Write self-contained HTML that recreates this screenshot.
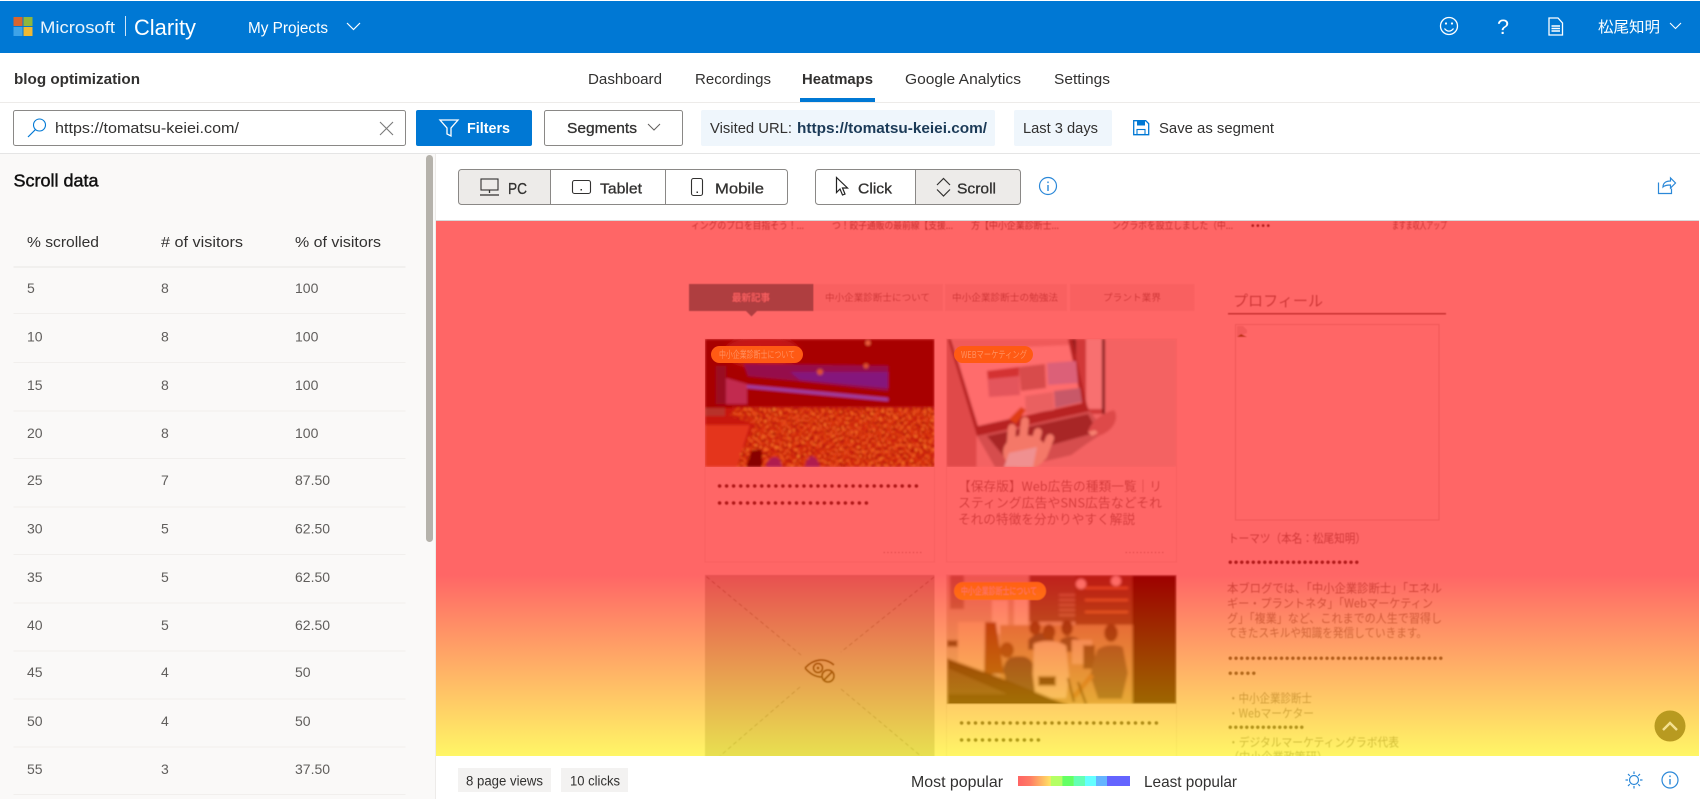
<!DOCTYPE html>
<html lang="en">
<head>
<meta charset="utf-8">
<title>Microsoft Clarity - Heatmaps</title>
<style>
html,body{margin:0;padding:0;background:#fff;width:1700px;height:799px;overflow:hidden}
svg{display:block}
text{font-family:"Liberation Sans","Noto Sans CJK JP",sans-serif;dominant-baseline:auto}
.jp{font-family:"Noto Sans CJK JP","Liberation Sans",sans-serif}
.m{stroke:currentColor;stroke-width:.3}
.w{fill:#fff}
.d{fill:#605e5c;font-size:14px}
.h{fill:#323130;font-size:15px}
.n{fill:#323130;font-size:15px}
.p{fill:#909090;font-size:12px}
.o{fill:#404040;font-size:13px}
.o2{fill:#404040;font-size:15px}
</style>
</head>
<body>
<svg width="1700" height="799" viewBox="0 0 1700 799" xmlns="http://www.w3.org/2000/svg">
<defs>
<linearGradient id="heat" gradientUnits="userSpaceOnUse" x1="0" y1="221" x2="0" y2="756">
<stop offset=".6617" stop-color="#f00"/><stop offset="1" stop-color="rgb(255,240,0)"/>
</linearGradient>
<linearGradient id="lg" x1="0" x2="1" y1="0" y2="0"><stop offset="0" stop-color="#ff6464"/><stop offset=".35" stop-color="#ff7a64"/><stop offset=".7" stop-color="#ffb464"/><stop offset="1" stop-color="#ffe664"/></linearGradient>
<filter id="b" x="-2%" y="-2%" width="104%" height="104%"><feGaussianBlur stdDeviation=".45"/></filter>
<filter id="b2" x="-2%" y="-2%" width="104%" height="104%"><feGaussianBlur stdDeviation="1.200"/></filter>
<filter id="b3" x="-30%" y="-30%" width="160%" height="160%"><feGaussianBlur stdDeviation="3"/></filter>
<filter id="crowd" x="0" y="0" width="100%" height="100%" color-interpolation-filters="sRGB">
<feTurbulence type="fractalNoise" baseFrequency=".45" numOctaves="2" seed="7"/>
<feColorMatrix type="matrix" values="1 0 0 0 .33  1.500 0 0 0 -.6  .5 0 0 0 -.2  0 0 0 0 1"/>
</filter>
<clipPath id="c1"><rect x="705" y="339" width="229.500" height="128"/></clipPath>
<clipPath id="c2"><rect x="946.500" y="339" width="230" height="128"/></clipPath>
<clipPath id="c3"><rect x="946.500" y="575" width="230" height="129"/></clipPath>
<clipPath id="heatclip"><rect x="436" y="221" width="1263" height="535"/></clipPath>
</defs>

<!-- page -->
<rect width="1700" height="799" fill="#fff"/>

<!-- header -->
<rect x="0" y="1" width="1700" height="52" fill="#0078d4"/>
<rect x="13.500" y="17" width="9" height="9" fill="#d9652f"/>
<rect x="23.500" y="17" width="9" height="9" fill="#8fb73c"/>
<rect x="13.500" y="27" width="9" height="9" fill="#3ea3e8"/>
<rect x="23.500" y="27" width="9" height="9" fill="#f0b932"/>
<text x="40" y="33" class="w" font-size="17" textLength="75" lengthAdjust="spacingAndGlyphs" fill-opacity=".92">Microsoft</text>
<rect x="125" y="16" width="1" height="20" fill="#cfe4f7"/>
<text x="134" y="35" class="w" font-size="22" textLength="62" lengthAdjust="spacingAndGlyphs">Clarity</text>
<text x="248" y="33" class="w" font-size="15.500" textLength="80" lengthAdjust="spacingAndGlyphs">My Projects</text>
<path d="M347 23l6.500 6.500L360 23" fill="none" stroke="#fff" stroke-width="1.200"/>
<circle cx="1449" cy="26" r="8.500" fill="none" stroke="#fff" stroke-width="1.300"/>
<circle cx="1446" cy="23.500" r="1.100" fill="#fff"/><circle cx="1452" cy="23.500" r="1.100" fill="#fff"/>
<path d="M1444.500 28.500c2.500 3.500 6.500 3.500 9 0" fill="none" stroke="#fff" stroke-width="1.200"/>
<text x="1497" y="34" class="w" font-size="21" textLength="12" lengthAdjust="spacingAndGlyphs">?</text>
<path d="M1549 18h9l4.500 5v12h-13.500z" fill="none" stroke="#fff" stroke-width="1.300"/>
<path d="M1551.500 26h8.500M1551.500 28.500h8.500M1551.500 31h8.500" stroke="#fff" stroke-width="1.500"/>
<text x="1598" y="32" class="w jp" font-size="15" textLength="62" lengthAdjust="spacingAndGlyphs">松尾知明</text>
<path d="M1670 23l5.500 5.500L1681 23" fill="none" stroke="#fff" stroke-width="1.100"/>

<!-- nav -->
<text x="14" y="84" font-size="15" font-weight="bold" fill="#323130" textLength="126" lengthAdjust="spacingAndGlyphs">blog optimization</text>
<text x="588" y="84" class="n" textLength="74" lengthAdjust="spacingAndGlyphs">Dashboard</text>
<text x="695" y="84" class="n" textLength="76" lengthAdjust="spacingAndGlyphs">Recordings</text>
<text x="802" y="84" class="n" font-weight="bold" textLength="71" lengthAdjust="spacingAndGlyphs">Heatmaps</text>
<text x="905" y="84" class="n" textLength="116" lengthAdjust="spacingAndGlyphs">Google Analytics</text>
<text x="1054" y="84" class="n" textLength="56" lengthAdjust="spacingAndGlyphs">Settings</text>
<rect x="800" y="98" width="75" height="4" fill="#0078d4"/>
<rect x="0" y="102" width="1700" height="1" fill="#edebe9"/>

<!-- filter row -->
<rect x="13.500" y="110.500" width="392" height="35" rx="2" fill="#fff" stroke="#8a8886"/>
<circle cx="39.500" cy="125" r="6" fill="none" stroke="#0078d4" stroke-width="1.100"/>
<path d="M35.500 129.500L28 137" stroke="#0078d4" stroke-width="1.200"/>
<text x="55" y="133" class="n" textLength="184" lengthAdjust="spacingAndGlyphs">https://tomatsu-keiei.com/</text>
<path d="M380 122l13 13M393 122l-13 13" stroke="#7a7a7a" stroke-width="1.100"/>
<rect x="416" y="110" width="116" height="36" rx="2" fill="#0078d4"/>
<path d="M440 120h18l-7 8v8l-4-2v-6z" fill="none" stroke="#fff" stroke-width="1.300"/>
<text x="467" y="133" class="w" font-size="15" font-weight="bold" textLength="43" lengthAdjust="spacingAndGlyphs">Filters</text>
<rect x="544.500" y="110.500" width="138" height="35" rx="2" fill="#fff" stroke="#8a8886"/>
<text x="567" y="133" class="n m" textLength="70" lengthAdjust="spacingAndGlyphs" style="color:#323130">Segments</text>
<path d="M648 124l6 6 6-6" fill="none" stroke="#605e5c" stroke-width="1"/>
<rect x="701" y="110" width="294" height="36" rx="2" fill="#eff6fc"/>
<text x="710" y="133" font-size="15" fill="#323130" textLength="82" lengthAdjust="spacingAndGlyphs">Visited URL:</text>
<text x="797" y="133" font-size="15" font-weight="bold" fill="#1b3a57" textLength="190" lengthAdjust="spacingAndGlyphs">https://tomatsu-keiei.com/</text>
<rect x="1014" y="110" width="98" height="36" rx="2" fill="#eff6fc"/>
<text x="1023" y="133" font-size="15" fill="#323130" textLength="75" lengthAdjust="spacingAndGlyphs">Last 3 days</text>
<path d="M1133.700 120.700h12l3 3v11h-15z" fill="none" stroke="#0078d4" stroke-width="1.300"/>
<rect x="1137" y="121" width="8" height="4.500" fill="#0078d4"/>
<rect x="1137" y="129.500" width="8" height="5" fill="none" stroke="#0078d4" stroke-width="1.100"/>
<text x="1159" y="133" class="n" textLength="115" lengthAdjust="spacingAndGlyphs">Save as segment</text>
<rect x="0" y="153" width="1700" height="1" fill="#e5e5e5"/>

<!-- sidebar -->
<rect x="0" y="154" width="435" height="645" fill="#faf9f8"/>
<rect x="435" y="154" width="1" height="645" fill="#edebe9"/>
<rect x="426" y="155" width="7" height="387" rx="3.500" fill="#b5b2ab"/>
<text x="13.500" y="186.500" font-size="17.500" fill="#111" textLength="85" lengthAdjust="spacingAndGlyphs" style="color:#111;stroke:#111;stroke-width:.45">Scroll data</text>
<text x="27" y="247" class="h" textLength="72" lengthAdjust="spacingAndGlyphs">% scrolled</text>
<text x="161" y="247" class="h" textLength="82" lengthAdjust="spacingAndGlyphs"># of visitors</text>
<text x="295" y="247" class="h" textLength="86" lengthAdjust="spacingAndGlyphs">% of visitors</text>
<g fill="#f1efed">
<rect x="13.500" y="266.500" width="392" height="1" fill="#e8e6e4"/>
<rect x="13.500" y="313" width="392" height="1"/>
<rect x="13.500" y="362" width="392" height="1"/>
<rect x="13.500" y="410.500" width="392" height="1"/>
<rect x="13.500" y="458" width="392" height="1"/>
<rect x="13.500" y="506.500" width="392" height="1"/>
<rect x="13.500" y="554" width="392" height="1"/>
<rect x="13.500" y="602.500" width="392" height="1"/>
<rect x="13.500" y="650.500" width="392" height="1"/>
<rect x="13.500" y="698.500" width="392" height="1"/>
<rect x="13.500" y="746.500" width="392" height="1"/>
<rect x="13.500" y="794" width="392" height="1"/>
</g>
<text x="27" y="293" class="d">5</text><text x="161" y="293" class="d">8</text><text x="295" y="293" class="d">100</text>
<text x="27" y="341.500" class="d">10</text><text x="161" y="341.500" class="d">8</text><text x="295" y="341.500" class="d">100</text>
<text x="27" y="390" class="d">15</text><text x="161" y="390" class="d">8</text><text x="295" y="390" class="d">100</text>
<text x="27" y="438" class="d">20</text><text x="161" y="438" class="d">8</text><text x="295" y="438" class="d">100</text>
<text x="27" y="485" class="d">25</text><text x="161" y="485" class="d">7</text><text x="295" y="485" class="d">87.50</text>
<text x="27" y="533.500" class="d">30</text><text x="161" y="533.500" class="d">5</text><text x="295" y="533.500" class="d">62.50</text>
<text x="27" y="582" class="d">35</text><text x="161" y="582" class="d">5</text><text x="295" y="582" class="d">62.50</text>
<text x="27" y="630" class="d">40</text><text x="161" y="630" class="d">5</text><text x="295" y="630" class="d">62.50</text>
<text x="27" y="677" class="d">45</text><text x="161" y="677" class="d">4</text><text x="295" y="677" class="d">50</text>
<text x="27" y="726" class="d">50</text><text x="161" y="726" class="d">4</text><text x="295" y="726" class="d">50</text>
<text x="27" y="774" class="d">55</text><text x="161" y="774" class="d">3</text><text x="295" y="774" class="d">37.50</text>

<!-- toolbar -->
<path d="M461.500 169.500H550.500V204.500H461.500a3 3 0 0 1-3-3v-29a3 3 0 0 1 3-3z" fill="#edebe9"/>
<rect x="458.500" y="169.500" width="329" height="35" rx="3" fill="none" stroke="#8a8886"/>
<path d="M550.500 169.500v35M665.500 169.500v35" stroke="#8a8886"/>
<rect x="481" y="179" width="17" height="11" fill="none" stroke="#323130" stroke-width="1.100"/>
<path d="M489.500 190v3M480 195h19" stroke="#323130" stroke-width="1.300"/>
<text x="508" y="194" font-size="16" fill="#323130" class="m" textLength="19" lengthAdjust="spacingAndGlyphs" style="color:#323130">PC</text>
<rect x="572.500" y="180.500" width="18" height="13" rx="2" fill="none" stroke="#323130" stroke-width="1.100"/>
<rect x="580.500" y="189" width="1.500" height="1.500" fill="#323130"/>
<text x="600" y="193.500" class="n m" textLength="42" lengthAdjust="spacingAndGlyphs" style="color:#323130">Tablet</text>
<rect x="691.500" y="178.500" width="11" height="17" rx="2" fill="none" stroke="#323130" stroke-width="1.100"/>
<rect x="696.500" y="191.500" width="1.500" height="1.500" fill="#323130"/>
<text x="715" y="193.500" class="n m" textLength="49" lengthAdjust="spacingAndGlyphs" style="color:#323130">Mobile</text>
<path d="M1018 169.500H915.500V204.500H1018a2.500 2.500 0 0 0 2.500-2.500V172a2.500 2.500 0 0 0-2.500-2.500z" fill="#edebe9"/>
<rect x="815.500" y="169.500" width="205" height="35" rx="3" fill="none" stroke="#8a8886"/>
<path d="M915.500 169.500v35" stroke="#8a8886"/>
<path d="M836.500 177.500v15l3.500-3.500 2.500 6 2.500-1-2.500-6h5z" fill="#fff" stroke="#222" stroke-width="1.200"/>
<text x="858" y="193.500" class="n m" textLength="34" lengthAdjust="spacingAndGlyphs" style="color:#323130">Click</text>
<path d="M937 185l6.500-6.500L950 185M937 189.500l6.500 6.500 6.500-6.500" fill="none" stroke="#323130" stroke-width="1.200"/>
<text x="957" y="193.500" class="n m" textLength="39" lengthAdjust="spacingAndGlyphs" style="color:#323130">Scroll</text>
<circle cx="1048" cy="186" r="8.500" fill="none" stroke="#2b88d8" stroke-width="1.200"/>
<rect x="1047.300" y="185" width="1.400" height="6" fill="#2b88d8"/><rect x="1047.300" y="181.500" width="1.400" height="1.600" fill="#2b88d8"/>
<path d="M1658.500 182.500v11h13v-5M1663 187c0-4 3-6 7.500-6v-3l5 5-5 5v-3c-3.500 0-6 .5-7.500 2z" fill="none" stroke="#2b88d8" stroke-width="1.200"/>
<rect x="436" y="220" width="1263" height="1" fill="#d8d8d8"/>

<!-- heatmap page content (below overlay) -->
<g clip-path="url(#heatclip)">
<g filter="url(#b)">
<g fill="#787878" font-size="10">
<text x="691" y="229" class="jp" textLength="113" lengthAdjust="spacingAndGlyphs">ィングのプロを目指そう！...</text>
<text x="832" y="229" class="jp" textLength="121" lengthAdjust="spacingAndGlyphs">つ！餃子通販の最前線【支援...</text>
<text x="971" y="229" class="jp" textLength="88" lengthAdjust="spacingAndGlyphs">方【中小企業診断士...</text>
<text x="1112" y="229" class="jp" textLength="121" lengthAdjust="spacingAndGlyphs">ングラボを設立しました（中...</text>
<text x="1251" y="229" textLength="19" lengthAdjust="spacing" fill="#404040">••••</text>
<text x="1392" y="229" class="jp" textLength="55" lengthAdjust="spacingAndGlyphs">ますま収入アップ</text>
</g>

<!-- tabs -->
<rect x="689" y="284" width="124.500" height="27" fill="#399aa0"/>
<path d="M746 311h11l-5.500 5.500z" fill="#399aa0"/>
<rect x="814" y="284" width="129" height="27" fill="#f1f1f1"/>
<rect x="945" y="284" width="122" height="27" fill="#f1f1f1"/>
<rect x="1070" y="284" width="124.500" height="27" fill="#f1f1f1"/>
<text x="732" y="301" class="jp" font-size="9.500" fill="#fff" textLength="38" lengthAdjust="spacingAndGlyphs">最新記事</text>
<g font-size="9.500" fill="#7e7e7e">
<text x="825" y="301" class="jp" textLength="105" lengthAdjust="spacingAndGlyphs">中小企業診断士について</text>
<text x="952" y="301" class="jp" textLength="106" lengthAdjust="spacingAndGlyphs">中小企業診断士の勉強法</text>
<text x="1103" y="301" class="jp" textLength="58" lengthAdjust="spacingAndGlyphs">プラント業界</text>
</g>

<!-- cards row 1 -->
<rect x="705" y="339" width="229.500" height="223" fill="#fff" stroke="#ececec"/>
<rect x="946.500" y="339" width="230" height="223" fill="#fff" stroke="#ececec"/>
<text x="717" y="491" class="o2" textLength="202" lengthAdjust="spacing">•••••••••••••••••••••••••••••</text>
<text x="717" y="508" class="o2" textLength="152" lengthAdjust="spacing">••••••••••••••••••••••</text>
<text x="883" y="553" font-size="9" fill="#555" textLength="39" lengthAdjust="spacing">...........</text>
<g font-size="13" fill="#909090">
<text x="958" y="491" class="jp" textLength="204" lengthAdjust="spacingAndGlyphs">【保存版】Web広告の種類一覧｜リ</text>
<text x="958" y="507.500" class="jp" textLength="204" lengthAdjust="spacingAndGlyphs">スティング広告やSNS広告などそれ</text>
<text x="958" y="524" class="jp" textLength="177" lengthAdjust="spacingAndGlyphs">それの特徴を分かりやすく解説</text>
</g>
<text x="1125" y="553" font-size="9" fill="#555" textLength="39" lengthAdjust="spacing">...........</text>

<!-- cards row 2 -->
<rect x="705" y="575" width="229.500" height="200" fill="#c5c8c8"/>
<g stroke="#7a7a7a" stroke-width=".8" stroke-dasharray="4 3" fill="none">
<path d="M706.500 576.700L801 655M934 577L841 652M800 687L720 756M841 689L922 757"/>
</g>
<g fill="none" stroke="#3a2a1a" stroke-width="2">
<path d="M805 668c8-9 20-11 29-3M805 668c5 6 11 9 17 9"/>
<circle cx="818" cy="668" r="4.500"/>
<circle cx="828" cy="676" r="6"/>
<path d="M824 680l8-8"/>
</g>
<circle cx="818" cy="668" r="1.500" fill="#3a2a1a"/>

<rect x="946.500" y="575" width="230" height="200" fill="#fff" stroke="#ececec"/>
<g clip-path="url(#c3)"><g filter="url(#b2)">
<rect x="946.500" y="575" width="230" height="129" fill="#d8cfc8"/>
<rect x="950" y="575" width="14" height="34" fill="#9a8f87"/>
<rect x="992" y="600" width="16" height="34" fill="#fff"/>
<rect x="1014" y="595" width="14" height="40" fill="#fff"/>
<rect x="1029" y="575" width="46" height="47" fill="#5e4f47"/>
<g stroke="#c7b6a6" stroke-width="1"><path d="M1059 595h16M1059 600h16M1059 605h16M1059 610h16M1059 615h16"/></g>
<rect x="1075" y="575" width="57" height="55" fill="#5a4030"/>
<g stroke="#e8a060" stroke-width="1.500"><path d="M1085 588h43M1085 600h43M1085 612h43"/></g>
<circle cx="1081" cy="584" r="5" fill="#fff"/><circle cx="1116" cy="581" r="5" fill="#fff"/>
<rect x="1132" y="575" width="44.500" height="129" fill="#0a0502"/>
<rect x="1000" y="625" width="132" height="79" fill="#c4ab88"/>
<rect x="947" y="640" width="15" height="7" fill="#2a2a2a"/>
<rect x="958" y="622" width="28" height="50" fill="#f5e8d8"/>
<path d="M985 622h11l8 52h-20z" fill="#6e401a"/>
<ellipse cx="1007" cy="650" rx="7" ry="8" fill="#5e3a22"/>
<path d="M1003 670c2-14 10-14 18-14s14 6 14 16l4 22-30 0z" fill="#33353c"/>
<path d="M1028 640c6-7 14-10 26-6v16h-26z" fill="#33353c"/>
<ellipse cx="1035" cy="628" rx="6" ry="7" fill="#4a2c20"/>
<ellipse cx="1067" cy="628" rx="6" ry="8" fill="#3a2820"/>
<path d="M1060 640c5-5 15-5 20 0v12h-20z" fill="#40403c"/>
<ellipse cx="1049" cy="632" rx="6.500" ry="8" fill="#473024"/>
<path d="M1034 644c8-4 24-4 32 2l3 30-3 22h-30l-3-24z" fill="#f2ebe4"/>
<rect x="1038" y="676" width="18" height="10" fill="#181414"/>
<rect x="1072" y="640" width="20" height="24" fill="#e8dad0"/>
<rect x="1083" y="645" width="12" height="24" fill="#443d36"/>
<ellipse cx="1111" cy="633" rx="7" ry="9" fill="#3d2a20"/>
<path d="M1097 650c6-6 20-6 26-3l5 26-6 26h-24l-8-24z" fill="#595248"/>
<path d="M1092 675l-18 22" stroke="#b58050" stroke-width="5"/>
<path d="M1068 678l6 24M1078 682l8 22" stroke="#111" stroke-width="2.500"/>
<path d="M947 658l50 18 74 30H947z" fill="#141410"/>
<path d="M947 668l60 26-60 0z" fill="#3a3a30"/>
</g></g>
<rect x="954" y="582" width="92" height="18" rx="9" fill="#ffe132"/>
<text x="961" y="594.500" class="jp" font-size="9.500" fill="#fff" textLength="76" lengthAdjust="spacingAndGlyphs">中小企業診断士について</text>
<text x="959" y="728" class="o2" textLength="200" lengthAdjust="spacing">•••••••••••••••••••••••••••••</text>
<text x="959" y="745" class="o2" textLength="82" lengthAdjust="spacing">••••••••••••</text>

<!-- profile sidebar -->
<text x="1233" y="306" class="jp" font-size="15" fill="#8a8a8a" textLength="90" lengthAdjust="spacingAndGlyphs">プロフィール</text>
<rect x="1228" y="313" width="218" height="1.500" fill="#777"/>
<rect x="1235.500" y="324.500" width="203.500" height="195.500" fill="#fff" stroke="#d8d8d8"/>
<path d="M1237 326h6l4 4v3l-5 2-5 2z" fill="#e0e0e0"/>
<path d="M1237 337l4-3 6 3z" fill="#5a7d2a"/>
<text x="1228" y="542.500" class="jp p" textLength="138" lengthAdjust="spacingAndGlyphs">トーマツ（本名：松尾知明）</text>
<text x="1228" y="566.500" class="o" textLength="131" lengthAdjust="spacing">•••••••••••••••••••••••</text>
<text x="1227" y="592.500" class="jp p" textLength="215" lengthAdjust="spacingAndGlyphs">本ブログでは、「中小企業診断士」「エネル</text>
<text x="1227" y="607.500" class="jp p" textLength="206" lengthAdjust="spacingAndGlyphs">ギー・プラントネタ」「Webマーケティン</text>
<text x="1227" y="622.500" class="jp p" textLength="215" lengthAdjust="spacingAndGlyphs">グ」「複業」など、これまでの人生で習得し</text>
<text x="1227" y="637" class="jp p" textLength="200" lengthAdjust="spacingAndGlyphs">てきたスキルや知識を発信していきます。</text>
<text x="1228" y="662.500" class="o" textLength="215" lengthAdjust="spacing">••••••••••••••••••••••••••••••••••••••</text>
<text x="1228" y="677.500" class="o" textLength="28" lengthAdjust="spacing">•••••</text>
<text x="1228" y="702.500" class="jp p" textLength="84" lengthAdjust="spacingAndGlyphs">・中小企業診断士</text>
<text x="1228" y="717.500" class="jp p" textLength="86" lengthAdjust="spacingAndGlyphs">・Webマーケター</text>
<text x="1228" y="731.500" class="o" textLength="76" lengthAdjust="spacing">••••••••••••••</text>
<text x="1228" y="746.500" class="jp p" textLength="171" lengthAdjust="spacingAndGlyphs">・デジタルマーケティングラボ代表</text>
<text x="1228" y="761" class="jp p" textLength="100" lengthAdjust="spacingAndGlyphs">（中小企業政策研）</text>
</g>

<!-- heat overlay -->
<rect x="436" y="221" width="1263" height="535" fill="url(#heat)" fill-opacity=".6"/>

<!-- card 1 image (final tinted colours) -->
<g clip-path="url(#c1)">
<g filter="url(#b2)">
<rect x="705" y="339" width="229.500" height="128" fill="#a80000"/>
<ellipse cx="762" cy="352" rx="38" ry="16" fill="#d02420" opacity=".75" filter="url(#b3)"/>
<path d="M744 364L888 366V391L800 381L748 376z" fill="#960e4c"/>
<path d="M790 372L888 372V388L800 380z" fill="#7e1a92" opacity=".7"/>
<path d="M726 378l21 6v20h-21z" fill="#c22c50"/>
<rect x="716" y="366" width="10" height="38" fill="#9a0a24"/>
<path d="M747 385L888 398v3L747 388z" fill="#a040a8"/>
<path d="M732 406H934V410H732z" fill="#b80c08"/>
<circle cx="760" cy="352" r="4" fill="#f06060"/>
<circle cx="820" cy="372" r="3" fill="#e05030"/><circle cx="866" cy="366" r="2.500" fill="#e05030"/><circle cx="868" cy="343" r="2.500" fill="#f06040"/>
<rect x="728" y="408" width="206.500" height="59" filter="url(#crowd)"/>
<path d="M705 408h32l-8 8 26 8-14 28-6 15h-30z" fill="#c81810"/>
<path d="M705 425h45l-9 28-4 14h-32z" fill="#e4341e"/>
<path d="M705 408h20v8h-20z" fill="#b8312a"/>
<path d="M766 467c1-6 4-9 8-10 5 0 7 4 8 10z" fill="#b01a50"/>
<path d="M805 467c1-7 4-10 7-11 4 1 6 5 8 11z" fill="#b01a50"/>
<path d="M752 450h10v17h-16z" fill="#880000"/>
</g>
</g>
<rect x="711" y="346" width="92" height="17" rx="8.500" fill="#ff5a14"/>
<text x="719" y="358" class="jp" font-size="9.500" fill="#ff9060" textLength="76" lengthAdjust="spacingAndGlyphs">中小企業診断士について</text>

<!-- card 2 image -->
<g clip-path="url(#c2)">
<g filter="url(#b2)">
<rect x="946.500" y="339" width="230" height="128" fill="#f46262"/>
<rect x="946.500" y="339" width="30" height="128" fill="#e04a4a"/>
<rect x="1071" y="339" width="34" height="75" fill="#d23838"/>
<rect x="1086" y="339" width="16" height="70" fill="#f87070"/>
<rect x="1102" y="339" width="3" height="75" fill="#8a1414"/>
<rect x="1071" y="339" width="5" height="74" fill="#9a1c1c"/>
<path d="M948 339H1072L1087 405 1090 413 977 436z" fill="#b82222"/>
<path d="M951 339H1068L1082 403 978 426z" fill="#ff6c6c"/>
<path d="M952 339H1068L1069 345 955 350z" fill="#f05a5a"/>
<path d="M987 371L1019 367 1020 395 989 397z" fill="#e4545c"/>
<path d="M987 371L1019 367 1019 376 988 379z" fill="#d43030"/>
<path d="M1019 367L1045 364 1046 388 1021 391z" fill="#d84c4c"/>
<path d="M1047 363L1076 361 1078 383 1048 385z" fill="#dc6078"/>
<path d="M1025 396L1053 392 1054 410 1026 414z" fill="#ea6060"/>
<path d="M1054 391L1080 388 1082 402 1055 408z" fill="#c85868"/>
<path d="M1009 419l12-12 5 3-10 14z" fill="#e03c14"/>
<path d="M977 436L1090 411 1115 445 1020 467H995z" fill="#d64e4e"/>
<path d="M987 436L1088 414 1098 432 1005 458z" fill="#a82828"/>
<ellipse cx="1025" cy="452" rx="22" ry="17" fill="#f47868"/>
<path d="M1010 455L1012 428M1022 448L1025 421M1033 450L1038 432M1043 456L1050 438" stroke="#f47868" stroke-width="8" stroke-linecap="round" fill="none"/>
<path d="M1004 467l5-14 28-6-4 20z" fill="#f09090"/>
<path d="M1055 467L1085 445 1115 425 1176 440V467z" fill="#f46262"/>
<path d="M1088 432c3-10 12-18 26-22 6 8-1 22-16 26z" fill="#de4848"/>
<path d="M1088 432l7-2 3 3-6 3z" fill="#f88070"/>
</g>
</g>
<rect x="954" y="346" width="79" height="17" rx="8.500" fill="#ff5a14"/>
<text x="961" y="358" class="jp" font-size="9.500" fill="#ff9060" textLength="66" lengthAdjust="spacingAndGlyphs">WEBマーケティング</text>

<circle cx="1670" cy="726" r="15.500" fill="#b89a20"/>
<path d="M1663 730l7-7 7 7" fill="none" stroke="#f4e090" stroke-width="2.400"/>
</g>

<!-- footer -->
<rect x="458" y="768" width="93" height="24" fill="#f3f2f1"/>
<text x="466" y="785.500" font-size="13.500" fill="#323130" textLength="77" lengthAdjust="spacingAndGlyphs">8 page views</text>
<rect x="561" y="768" width="67" height="24" fill="#f3f2f1"/>
<text x="570" y="785.500" font-size="13.500" fill="#323130" textLength="50" lengthAdjust="spacingAndGlyphs">10 clicks</text>
<text x="911" y="787" font-size="16" fill="#323130" textLength="92" lengthAdjust="spacingAndGlyphs">Most popular</text>
<rect x="1018" y="776" width="33" height="10" fill="url(#lg)"/>
<rect x="1050.700" y="776" width="12" height="10" fill="#b4ff64"/>
<rect x="1062.400" y="776" width="11.500" height="10" fill="#64ff64"/>
<rect x="1073.800" y="776" width="11.500" height="10" fill="#64ffb4"/>
<rect x="1085" y="776" width="11" height="10" fill="#64ffff"/>
<rect x="1096" y="776" width="11" height="10" fill="#64b4ff"/>
<rect x="1107" y="776" width="23" height="10" fill="#6464ff"/>
<text x="1144" y="787" font-size="16" fill="#323130" textLength="93" lengthAdjust="spacingAndGlyphs">Least popular</text>
<circle cx="1634" cy="780" r="4.500" fill="none" stroke="#2b88d8" stroke-width="1.200"/>
<path d="M1634 771.500v2.500M1634 786v2.500M1625.500 780h2.500M1640 780h2.500M1628 774l1.800 1.800M1638.200 784.200l1.800 1.800M1640 774l-1.800 1.800M1629.800 784.200l-1.800 1.800" stroke="#2b88d8" stroke-width="1.200"/>
<circle cx="1670" cy="780" r="8" fill="none" stroke="#2b88d8" stroke-width="1.200"/>
<rect x="1669.300" y="779" width="1.400" height="5.500" fill="#2b88d8"/><rect x="1669.300" y="775.500" width="1.400" height="1.600" fill="#2b88d8"/>
</svg>
</body>
</html>
